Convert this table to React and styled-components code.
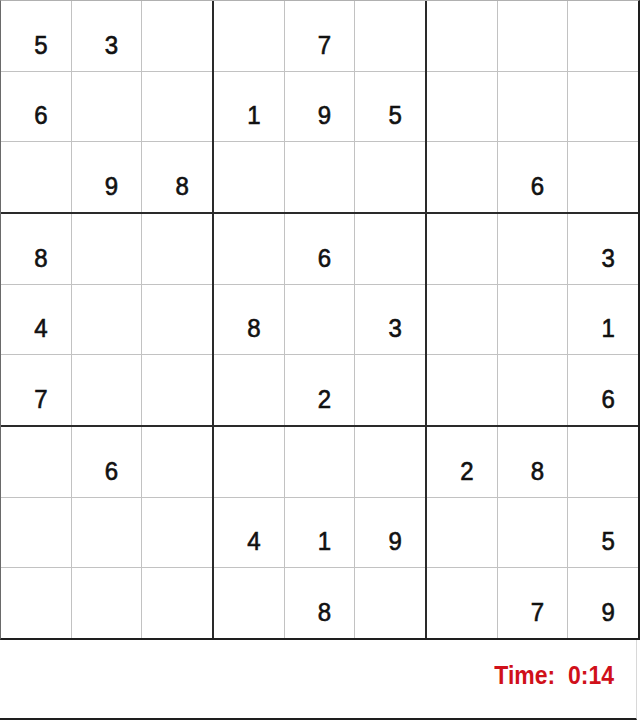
import styled, { createGlobalStyle } from "styled-components";

const puzzle = [
  "53__7____",
  "6__195___",
  "_98____6_",
  "8___6___3",
  "4__8_3__1",
  "7___2___6",
  "_6____28_",
  "___419__5",
  "____8__79",
];

// value of cell (r, c) inside box (br, bc)
const valueAt = (br, bc, r, c) => {
  const ch = puzzle[br * 3 + r][bc * 3 + c];
  return ch === "_" ? "" : ch;
};

const App = () => {
  return (
    <>
      <GlobalStyle />
      <Page>
        <Board>
          {[0, 1, 2].map((br) =>
            [0, 1, 2].map((bc) => (
              <Box key={`${br}-${bc}`}>
                {[0, 1, 2].map((r) =>
                  [0, 1, 2].map((c) => (
                    <Cell key={`${r}-${c}`}>
                      <Digit>{valueAt(br, bc, r, c)}</Digit>
                    </Cell>
                  ))
                )}
              </Box>
            ))
          )}
        </Board>
        <Footer>
          <Timer>Time:&nbsp;&nbsp;0:14</Timer>
        </Footer>
      </Page>
    </>
  );
};

const GlobalStyle = createGlobalStyle`
  body {
    margin: 0;
    background: #ffffff;
    font-family: "Liberation Sans", Arial, sans-serif;
  }
`;

const Page = styled.div`
  width: 640px;
  height: 720px;
  display: flex;
  flex-direction: column;
`;

const Board = styled.div`
  width: 640px;
  height: 640px;
  box-sizing: border-box;
  display: grid;
  grid-template-columns: repeat(3, 1fr);
  grid-template-rows: repeat(3, 1fr);
  gap: 2px;
  background-color: #2a2a2a;
  border-left: 1px solid #6a6a6a;
  border-top: 1px solid #b0b0b0;
  border-right: 2px solid #1e1e1e;
  border-bottom: 2px solid #1e1e1e;
`;

const Box = styled.div`
  display: grid;
  grid-template-columns: repeat(3, 1fr);
  grid-template-rows: repeat(3, 1fr);
  gap: 1px;
  background-color: #c2c2c2;
`;

const Cell = styled.div`
  background-color: #ffffff;
  display: flex;
  align-items: center;
  justify-content: center;
  box-sizing: border-box;
  padding: 18px 0 0 10px;
`;

const Digit = styled.span`
  font-size: 24px;
  color: #111111;
  -webkit-text-stroke: 0.6px #111111;
  transform: scaleY(1.08);
`;

const Footer = styled.div`
  flex: 1;
  display: flex;
  justify-content: flex-end;
  align-items: center;
  padding: 0 22px 8px 0;
  border-bottom: 2px solid #1e1e1e;
  border-right: 1px solid #d8d8d8;
  margin-right: 3px;
`;

const Timer = styled.div`
  font-size: 23px;
  font-weight: bold;
  color: #d0101a;
  transform: scaleY(1.12);
`;

export default App;
